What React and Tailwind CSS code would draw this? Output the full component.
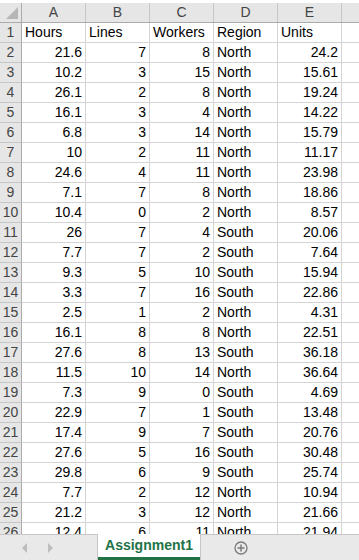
import React from 'react'

const rows = [
  ['Hours', 'Lines', 'Workers', 'Region', 'Units'],
  [21.6, 7, 8, 'North', 24.2],
  [10.2, 3, 15, 'North', 15.61],
  [26.1, 2, 8, 'North', 19.24],
  [16.1, 3, 4, 'North', 14.22],
  [6.8, 3, 14, 'North', 15.79],
  [10, 2, 11, 'North', 11.17],
  [24.6, 4, 11, 'North', 23.98],
  [7.1, 7, 8, 'North', 18.86],
  [10.4, 0, 2, 'North', 8.57],
  [26, 7, 4, 'South', 20.06],
  [7.7, 7, 2, 'South', 7.64],
  [9.3, 5, 10, 'South', 15.94],
  [3.3, 7, 16, 'South', 22.86],
  [2.5, 1, 2, 'North', 4.31],
  [16.1, 8, 8, 'North', 22.51],
  [27.6, 8, 13, 'South', 36.18],
  [11.5, 10, 14, 'North', 36.64],
  [7.3, 9, 0, 'South', 4.69],
  [22.9, 7, 1, 'South', 13.48],
  [17.4, 9, 7, 'South', 20.76],
  [27.6, 5, 16, 'South', 30.48],
  [29.8, 6, 9, 'South', 25.74],
  [7.7, 2, 12, 'North', 10.94],
  [21.2, 3, 12, 'North', 21.66],
  [12.4, 6, 11, 'North', 21.94],
]

const cols = ['A', 'B', 'C', 'D', 'E']

export default function App() {
  return (
    <div className="w-[359px] h-[560px] bg-white flex flex-col overflow-hidden text-[14px] text-black" style={{ fontFamily: '"Liberation Sans", Arial, sans-serif' }}>
      <div className="h-[3px] shrink-0 bg-white" />
      <div className="flex-1 min-h-0 overflow-hidden">
        {/* column headers */}
        <div className="flex h-[20px] bg-[#e6e6e6] border-b border-[#ababab]">
          <div className="w-[22px] shrink-0 border-r border-[#ababab] relative">
            <div className="absolute right-[3px] bottom-[3px] w-0 h-0 border-l-[12px] border-l-transparent border-b-[12px] border-b-[#b6b6b6]" />
          </div>
          {cols.map((c) => (
            <div key={c} className="w-[64px] shrink-0 border-r border-[#c6c6c6] flex items-center justify-center text-[#444]">
              {c}
            </div>
          ))}
          <div className="flex-1" />
        </div>

        {rows.map((r, i) => (
          <div key={i} className="flex h-[20px] border-b border-[#d4d4d4]">
            <div className="w-[22px] shrink-0 bg-[#e6e6e6] border-r border-[#ababab] flex items-center justify-center text-[#444] border-b border-b-[#c6c6c6] -mb-px">
              {i + 1}
            </div>
            {r.map((v, j) => (
              <div
                key={j}
                className={`w-[64px] shrink-0 border-r border-[#d4d4d4] flex items-center px-[3px] whitespace-nowrap ${typeof v === 'number' ? 'justify-end' : 'justify-start'}`}
              >
                {v}
              </div>
            ))}
            <div className="flex-1" />
          </div>
        ))}
      </div>

      {/* sheet tabs */}
      <div className="h-[26px] shrink-0 flex bg-[#e9e9e9]">
        <div className="w-[97px] shrink-0 border-t border-[#c6c6c6] flex items-center pl-[22px] gap-[21px]">
          <div className="w-0 h-0 border-y-[5px] border-y-transparent border-r-[5px] border-r-[#bdbdbd]" />
          <div className="w-0 h-0 border-y-[5px] border-y-transparent border-l-[5px] border-l-[#bdbdbd]" />
        </div>
        <div className="w-[104px] shrink-0 bg-white border-x border-[#c6c6c6] flex flex-col">
          <div className="flex-1 flex items-center justify-center font-bold text-[#217346] text-[14px]">Assignment1</div>
          <div className="h-[3px] bg-[#217346]" />
        </div>
        <div className="flex-1 border-t border-[#c6c6c6] flex items-center pl-[33px]">
          <svg width="14" height="14" viewBox="0 0 14 14">
            <circle cx="7" cy="7" r="6" fill="none" stroke="#7a7a7a" strokeWidth="1.3" />
            <path d="M7 3.5v7M3.5 7h7" stroke="#7a7a7a" strokeWidth="1.5" />
          </svg>
        </div>
      </div>
    </div>
  )
}
